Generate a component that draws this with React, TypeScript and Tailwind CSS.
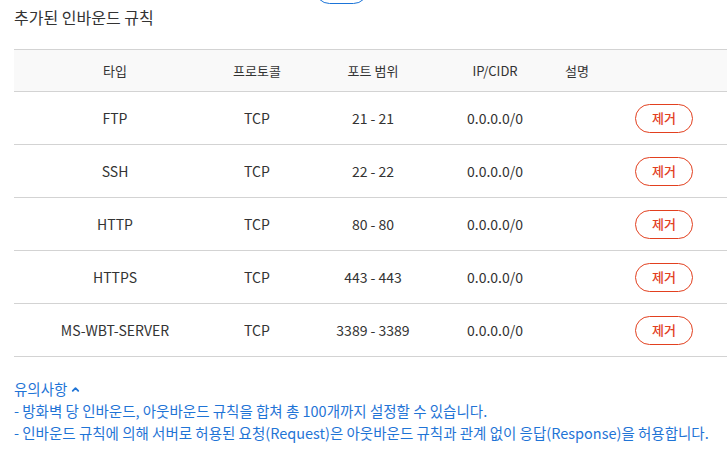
import React from 'react';
import { ChevronUp } from 'lucide-react';

interface Rule {
  type: string;
  protocol: string;
  port: string;
  cidr: string;
  desc: string;
}

const rules: Rule[] = [
  { type: 'FTP', protocol: 'TCP', port: '21 - 21', cidr: '0.0.0.0/0', desc: '' },
  { type: 'SSH', protocol: 'TCP', port: '22 - 22', cidr: '0.0.0.0/0', desc: '' },
  { type: 'HTTP', protocol: 'TCP', port: '80 - 80', cidr: '0.0.0.0/0', desc: '' },
  { type: 'HTTPS', protocol: 'TCP', port: '443 - 443', cidr: '0.0.0.0/0', desc: '' },
  { type: 'MS-WBT-SERVER', protocol: 'TCP', port: '3389 - 3389', cidr: '0.0.0.0/0', desc: '' },
];

const font = "font-['Noto_Sans_CJK_KR','Noto_Sans',sans-serif]";

const App: React.FC = () => {
  return (
    <div className={`${font} h-[463px] w-[727px] overflow-hidden bg-white pl-[14px] text-[#333]`}>
      {/* Button from the section above, mostly scrolled out */}
      <button className="-mt-[25px] ml-[301px] block h-[29px] w-[53px] rounded-full border border-[#1b74d8] bg-white" />

      {/* Title */}
      <h2 className="mt-[1px] text-[16px] leading-[24px] text-[#333]">추가된 인바운드 규칙</h2>

      {/* Rules table */}
      <table className="mt-[20px] w-[713px] table-fixed border-collapse">
        <colgroup>
          <col className="w-[202px]" />
          <col className="w-[82px]" />
          <col className="w-[150px]" />
          <col className="w-[94px]" />
          <col className="w-[70px]" />
          <col className="w-[115px]" />
        </colgroup>
        <thead>
          <tr className="h-[42px] border-y border-[#d3d3d3] bg-[#f9f9f9] text-[13px] text-[#333]">
            <th className="text-center font-normal">타입</th>
            <th className="text-center font-normal">프로토콜</th>
            <th className="text-center font-normal">포트 범위</th>
            <th className="text-center font-normal">IP/CIDR</th>
            <th className="text-center font-normal">설명</th>
            <th />
          </tr>
        </thead>
        <tbody>
          {rules.map((r) => (
            <tr key={r.type} className="h-[53px] border-b border-[#d3d3d3] text-[14px] text-[#333]">
              <td className="text-center">{r.type}</td>
              <td className="text-center">{r.protocol}</td>
              <td className="text-center">{r.port}</td>
              <td className="text-center">{r.cidr}</td>
              <td className="text-center">{r.desc}</td>
              <td className="pr-[11px] text-center">
                <button className="inline-flex h-[29px] w-[58px] items-center justify-center rounded-full border border-[#e2401f] bg-white text-[13px] font-medium text-[#e2401f]">
                  제거
                </button>
              </td>
            </tr>
          ))}
        </tbody>
      </table>

      {/* Notes */}
      <div className="mt-[21px] text-[14.5px] leading-[22px] text-[#1f74d6]">
        <div className="flex items-center gap-[3px]">
          유의사항
          <ChevronUp size={11} strokeWidth={4} />
        </div>
        <p>- 방화벽 당 인바운드, 아웃바운드 규칙을 합쳐 총 100개까지 설정할 수 있습니다.</p>
        <p>- 인바운드 규칙에 의해 서버로 허용된 요청(Request)은 아웃바운드 규칙과 관계 없이 응답(Response)을 허용합니다.</p>
      </div>
    </div>
  );
};

export default App;
